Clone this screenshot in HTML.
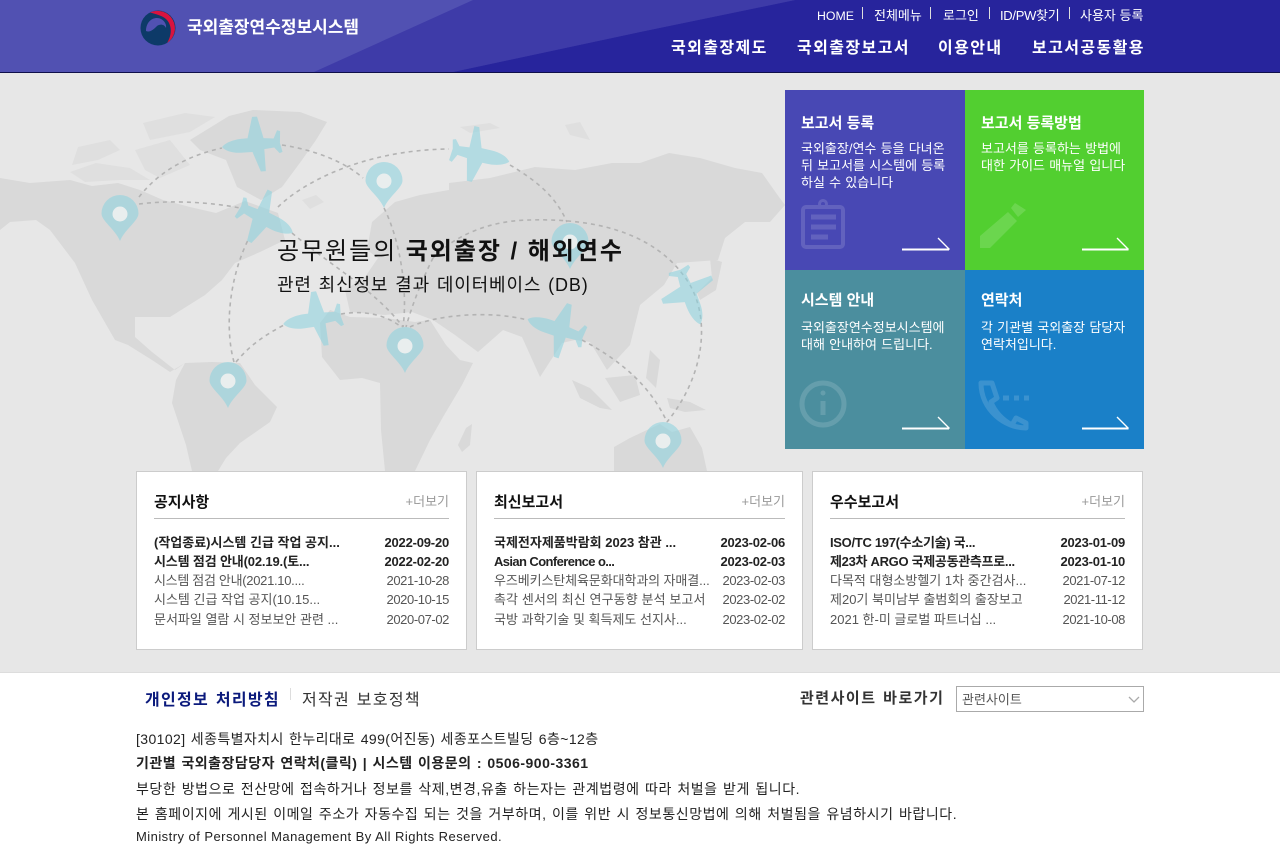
<!DOCTYPE html>
<html lang="ko">
<head>
<meta charset="utf-8">
<title>국외출장연수정보시스템</title>
<style>
*{box-sizing:border-box;margin:0;padding:0}
html,body{width:1280px;height:866px;overflow:hidden;background:#fff}
body{position:relative;font-family:"Liberation Sans","Noto Sans CJK KR",sans-serif;color:#222}
a{color:inherit;text-decoration:none}
.t{position:absolute;white-space:nowrap;line-height:20px;height:20px;display:block}
#hero{position:absolute;left:0;top:0;width:1280px;height:672px;background:#e7e7e7}
#map{position:absolute;left:0;top:0}
#head{position:absolute;left:0;top:0;width:1280px;height:73px}
.top{font-size:13px;color:#fff;top:6px}
.sep{position:absolute;width:1px;height:12px;top:7px;background:#ddd}
.nav{font-size:16px;font-weight:700;color:#fff;top:39px;letter-spacing:1.4px}
.tile{position:absolute;width:180px;height:180px;color:#fff}
.tile b{position:absolute;left:16px;top:22px;font-size:15px;line-height:20px;white-space:nowrap}
.tile p{position:absolute;left:16px;top:49px;font-size:13px;line-height:17px;white-space:nowrap;word-spacing:.6px}
.tile svg{position:absolute;left:0;top:0}
.card{position:absolute;top:471px;height:179px;background:#fff;border:1px solid #ccc}
.card h3{position:absolute;left:17px;top:20px;font-size:15px;line-height:22px;font-weight:700;color:#111}
.card .more{position:absolute;top:20px;font-size:13px;line-height:20px;color:#999}
.card hr{position:absolute;left:17px;top:46px;height:1px;border:0;background:#bbb}
.row{position:absolute;left:17px;font-size:13px;line-height:20px;height:20px;white-space:nowrap;color:#555}
.row i{position:absolute;top:0;font-style:normal;right:0;letter-spacing:-.4px}
.row.b{font-weight:700;color:#222}
.row.b i{letter-spacing:-.2px}
.ft{font-size:14px;color:#222;left:136px;word-spacing:1px;letter-spacing:.55px}
</style>
</head>
<body>
<div id="hero">
<svg id="map" width="785" height="471" viewBox="0 0 785 471">
<defs>
<path id="pl" d="M-30 0C-27-4-18-7-8-7L-4-7 2-28 7-28 12-6 22-5 26-13 29-12 28 0 30 9 27 10 22 4 12 5 12 27 7 27 0 7-10 7C-20 7-27 4-30 0Z"/>
<path id="pin" d="M0 46C-5 34-18.500 26-18.500 18.500A18.500 18.500 0 1 1 18.500 18.500C18.500 26 5 34 0 46Z"/>
</defs>
<g fill="#d9d9d9">
<path d="M0 178 30 183 70 180 92 186 118 183 140 190 163 200 190 207 216 213 245 201 278 213 285 240 260 252 235 263 222 280 205 295 170 317 150 317 135 317 135 337 152 352 175 370 185 363 170 372 152 360 128 345 115 340 92 300 75 263 50 230 36 220 10 222 0 230Z"/>
<path d="M185 363 212 362 240 363 255 385 277 407 270 422 240 443 226 458 218 471 192 471 186 445 172 403 176 380Z"/>
<path d="M190 140 229 116 253 110 300 112 327 122 316 140 302 160 282 187 261 200 237 187 226 160 200 150Z"/>
<path d="M320 323 330 310 350 317 385 318 415 322 430 320 446 345 460 360 473 363 462 385 443 417 430 440 415 471 385 471 381 430 380 383 362 378 340 380 322 357Z"/>
<path d="M466 428 472 424 470 445 462 452 458 445Z"/>
<path d="M367 250 372 222 395 202 420 195 449 190 449 183 490 178 535 167 575 170 612 163 640 163 669 153 700 158 735 168 762 173 779 197 785 205 770 222 745 222 725 238 718 260 677 263 664 285 640 305 630 345 607 370 590 342 575 340 562 343 540 377 522 337 503 330 478 352 455 335 433 320 412 312 385 315 350 312 345 290 365 277 378 258Z"/>
<path d="M710 258 722 262 716 290 700 300 697 293 712 278Z"/>
<path d="M572 380 590 388 612 410 600 408 580 398ZM605 378 635 375 640 395 620 402ZM650 350 660 360 656 388 646 378ZM667 398 690 402 706 410 685 412 670 408Z"/>
<path d="M614 447 630 438 647 430 660 424 672 432 690 427 702 448 707 471 614 471Z"/>
</g>
<g fill="#dfdfdf">
<path d="M78 147 110 140 120 150 98 160 72 165ZM143 123 185 113 215 117 190 132 150 140ZM70 172 96 163 130 168 150 180 120 180 85 182ZM135 150 170 140 190 165 160 178 145 170Z"/>
<path d="M302 200 316 195 324 202 310 209ZM460 127 490 123 500 128 470 133ZM565 125 580 122 590 140 570 135Z"/>
</g>
<g fill="none" stroke="#b3b3b3" stroke-width="1.600" stroke-dasharray="4 4">
<path d="M139 197C160 170 190 155 222 148M282 145C315 150 345 162 363 178"/>
<path d="M139 204C170 200 210 202 240 208"/>
<path d="M278 207C300 185 360 150 449 149"/>
<path d="M510 165C535 180 555 195 567 222"/>
<path d="M433 258C460 230 500 220 530 220C600 218 660 235 690 285C710 320 705 375 667 422"/>
<path d="M384 208C400 240 408 290 403 327"/>
<path d="M292 233C330 265 375 290 403 327M433 258C422 280 412 305 406 327"/>
<path d="M234 362C225 330 228 280 249 238"/>
<path d="M236 362C250 345 265 335 284 325M341 314C365 310 385 315 400 326"/>
<path d="M410 327C435 315 490 310 527 320"/>
<path d="M582 340C620 360 650 385 667 422"/>
</g>
<g fill="#8ed3df" opacity=".58">
<use href="#pl" transform="translate(252 145) rotate(-4)"/>
<use href="#pl" transform="translate(480 155) rotate(193)"/>
<use href="#pl" transform="translate(266 219) rotate(207)"/>
<use href="#pl" transform="translate(313 320) rotate(-8)"/>
<use href="#pl" transform="translate(556 329) rotate(19)"/>
<use href="#pl" transform="translate(690 296) rotate(250)"/>
<use href="#pin" transform="translate(120 195)"/>
<use href="#pin" transform="translate(384 162)"/>
<use href="#pin" transform="translate(570 223)"/>
<use href="#pin" transform="translate(405 327)"/>
<use href="#pin" transform="translate(228 362)"/>
<use href="#pin" transform="translate(663 422)"/>
</g>
<g fill="#e9eeee">
<circle cx="120" cy="214" r="7.500"/><circle cx="384" cy="181" r="7.500"/><circle cx="570" cy="242" r="7.500"/>
<circle cx="405" cy="346" r="7.500"/><circle cx="228" cy="381" r="7.500"/><circle cx="663" cy="441" r="7.500"/>
</g>
</svg>
<span class="t" style="left:277px;top:238px;height:28px;line-height:28px;font-size:24px;color:#111;letter-spacing:1.95px">공무원들의 <b>국외출장 / 해외연수</b></span>
<span class="t" style="left:277px;top:273px;height:24px;line-height:24px;font-size:18px;color:#111;word-spacing:1px;letter-spacing:.85px">관련 최신정보 결과 데이터베이스 (DB)</span>

<a class="tile" href="#" style="left:785px;top:90px;background:#4848b4">
<b style="top:24px">보고서 등록</b>
<p style="top:50px">국외출장/연수 등을 다녀온<br>뒤 보고서를 시스템에 등록<br>하실 수 있습니다</p>
<svg width="180" height="180" fill="none" stroke="#fff">
<g opacity=".14"><rect x="18" y="117" width="40" height="40" rx="3" stroke-width="4"/><path stroke-width="5" d="M26 127h25M26 137h25M26 147h17"/><circle cx="38" cy="114" r="3.500" stroke-width="3"/></g>
<path stroke-width="2" d="M117 159.500h47"/><path stroke-width="1.300" d="M153 148l11.500 11.500"/>
</svg>
</a>
<a class="tile" href="#" style="left:965px;top:90px;width:179px;background:#52cf30">
<b style="top:24px">보고서 등록방법</b>
<p style="top:50px">보고서를 등록하는 방법에<br>대한 가이드 매뉴얼 입니다</p>
<svg width="179" height="180" fill="none" stroke="#fff">
<g fill="#fff" stroke="none" opacity=".15"><path d="M15 158 15 146 43 122 52 131 25 158ZM50 113 61 120 53 127 46 118Z"/></g>
<path stroke-width="2" d="M117 159.500h46.500"/><path stroke-width="1.300" d="M152 148l11.500 11.500"/>
</svg>
</a>
<a class="tile" href="#" style="left:785px;top:270px;height:179px;background:#4b8e9e">
<b style="top:21px">시스템 안내</b>
<p>국외출장연수정보시스템에<br>대해 안내하여 드립니다.</p>
<svg width="180" height="179" fill="none" stroke="#fff">
<g opacity=".14"><circle cx="38" cy="134" r="21" stroke-width="5"/><path stroke-width="5" d="M38 131v14"/><circle cx="38" cy="123" r="2.500" fill="#fff" stroke="none"/></g>
<path stroke-width="2" d="M117 158.500h47"/><path stroke-width="1.300" d="M153 147l11.500 11.500"/>
</svg>
</a>
<a class="tile" href="#" style="left:965px;top:270px;width:179px;height:179px;background:#1a80c8">
<b style="top:21px">연락처</b>
<p>각 기관별 국외출장 담당자<br>연락처입니다.</p>
<svg width="179" height="179" fill="none" stroke="#fff">
<g opacity=".14"><path stroke-width="5" stroke-linejoin="round" d="M16 113L27 113 32 128 26 132C30 142 38 150 47 155L51 148 61 153 61 158C40 158 16 140 16 113Z"/><path stroke-width="5" d="M38 128h6M49 128h5M59 128h5"/></g>
<path stroke-width="2" d="M117 158.500h46.500"/><path stroke-width="1.300" d="M152 147l11.500 11.500"/>
</svg>
</a>
</div>

<div id="head">
<svg width="1280" height="73" style="position:absolute;left:0;top:0">
<rect width="1280" height="72" fill="#5151b2"/>
<polygon points="473,0 314,72 453,72 640,32 795,0" fill="#3e3ba8"/>
<polygon points="795,0 640,32 453,72 1280,72 1280,0" fill="#27249c"/>
<rect y="72" width="1280" height="1" fill="#0f0f4a"/>
<circle cx="158" cy="28" r="17.500" fill="#0d3a68"/>
<path d="M150 12.500A17.500 17.500 0 0 1 167 43C171 37 173 27 167 20 162 15 155 14 150 12.500Z" fill="#d8133f"/>
<path d="M146 31C146 23 151 18 157 18 163 18 167 24 166 28 164 24 160 24 157 26 154 29 150 33 146 31Z" fill="#5151b2"/>
</svg>
<a class="t" href="#" style="left:187px;top:18px;font-size:17px;font-weight:700;color:#fff;letter-spacing:0">국외출장연수정보시스템</a>
<a class="t top" href="#" style="left:817px;font-size:12.300px">HOME</a><i class="sep" style="left:862px"></i>
<a class="t top" href="#" style="left:874px">전체메뉴</a><i class="sep" style="left:930px"></i>
<a class="t top" href="#" style="left:943px">로그인</a><i class="sep" style="left:989px"></i>
<a class="t top" href="#" style="left:1000px;letter-spacing:-.3px">ID/PW찾기</a><i class="sep" style="left:1069px"></i>
<a class="t top" href="#" style="left:1080px">사용자 등록</a>
<a class="t nav" href="#" style="left:671px">국외출장제도</a>
<a class="t nav" href="#" style="left:797px">국외출장보고서</a>
<a class="t nav" href="#" style="left:938px">이용안내</a>
<a class="t nav" href="#" style="left:1032px">보고서공동활용</a>
</div>

<section class="card" style="left:136px;width:331px">
<h3>공지사항</h3><a class="more" href="#" style="right:17px">+더보기</a><hr style="width:295px">
<div class="row b" style="top:61px;width:295px">(작업종료)시스템 긴급 작업 공지...<i>2022-09-20</i></div>
<div class="row b" style="top:80px;width:295px"><span style="letter-spacing:-.15px">시스템 점검 안내(02.19.(토...</span><i>2022-02-20</i></div>
<div class="row" style="top:99px;width:295px"><span style="letter-spacing:-.3px">시스템 점검 안내(2021.10....</span><i>2021-10-28</i></div>
<div class="row" style="top:118px;width:295px">시스템 긴급 작업 공지(10.15...<i>2020-10-15</i></div>
<div class="row" style="top:138px;width:295px">문서파일 열람 시 정보보안 관련 ...<i>2020-07-02</i></div>
</section>
<section class="card" style="left:476px;width:327px">
<h3>최신보고서</h3><a class="more" href="#" style="right:17px">+더보기</a><hr style="width:291px">
<div class="row b" style="top:61px;width:291px">국제전자제품박람회 2023 참관 ...<i>2023-02-06</i></div>
<div class="row b" style="top:80px;width:291px"><span style="letter-spacing:-.6px">Asian Conference o...</span><i>2023-02-03</i></div>
<div class="row" style="top:99px;width:291px"><span style="letter-spacing:-.1px">우즈베키스탄체육문화대학과의 자매결...</span><i>2023-02-03</i></div>
<div class="row" style="top:118px;width:291px"><span style="letter-spacing:.1px">촉각 센서의 최신 연구동향 분석 보고서</span><i>2023-02-02</i></div>
<div class="row" style="top:138px;width:291px">국방 과학기술 및 획득제도 선지사...<i>2023-02-02</i></div>
</section>
<section class="card" style="left:812px;width:331px">
<h3>우수보고서</h3><a class="more" href="#" style="right:17px">+더보기</a><hr style="width:295px">
<div class="row b" style="top:61px;width:295px"><span style="letter-spacing:-.3px">ISO/TC 197(수소기술) 국...</span><i>2023-01-09</i></div>
<div class="row b" style="top:80px;width:295px"><span style="letter-spacing:-.3px">제23차 ARGO 국제공동관측프로...</span><i>2023-01-10</i></div>
<div class="row" style="top:99px;width:295px">다목적 대형소방헬기 1차 중간검사...<i>2021-07-12</i></div>
<div class="row" style="top:118px;width:295px">제20기 북미남부 출범회의 출장보고<i>2021-11-12</i></div>
<div class="row" style="top:138px;width:295px">2021 한-미 글로벌 파트너십 ...<i>2021-10-08</i></div>
</section>

<footer style="position:absolute;left:0;top:672px;width:1280px;height:194px;background:#fff;border-top:1px solid #ddd">
</footer>
<a class="t" href="#" style="left:145px;top:691px;font-size:16px;font-weight:700;color:#0b1a7c;letter-spacing:1.3px;word-spacing:1px">개인정보 처리방침</a>
<i style="position:absolute;left:290px;top:688px;width:1px;height:12px;background:#ddd"></i>
<a class="t" href="#" style="left:302px;top:691px;font-size:16px;color:#333;letter-spacing:1.3px;word-spacing:1px">저작권 보호정책</a>
<span class="t" style="left:800px;top:689px;font-size:15px;font-weight:700;color:#333;letter-spacing:1.5px;word-spacing:1px">관련사이트 바로가기</span>
<div style="position:absolute;left:956px;top:686px;width:188px;height:26px;border:1px solid #aaa;background:#fff">
<span class="t" style="left:5px;top:3px;font-size:13px;color:#555">관련사이트</span>
<svg width="12" height="8" style="position:absolute;left:171px;top:9px" fill="none" stroke="#aaa" stroke-width="1.300"><path d="M1 1l5 5 5-5"/></svg>
</div>
<span class="t ft" style="top:729px;letter-spacing:.4px">[30102] 세종특별자치시 한누리대로 499(어진동) 세종포스트빌딩 6층~12층</span>
<a class="t ft" href="#" style="top:753px;font-weight:700;letter-spacing:.48px">기관별 국외출장담당자 연락처(클릭) | 시스템 이용문의 : 0506-900-3361</a>
<span class="t ft" style="top:779px">부당한 방법으로 전산망에 접속하거나 정보를 삭제,변경,유출 하는자는 관계법령에 따라 처벌을 받게 됩니다.</span>
<span class="t ft" style="top:804px">본 홈페이지에 게시된 이메일 주소가 자동수집 되는 것을 거부하며, 이를 위반 시 정보통신망법에 의해 처벌됨을 유념하시기 바랍니다.</span>
<span class="t ft" style="top:827px;font-size:13px;word-spacing:0;letter-spacing:.46px">Ministry of Personnel Management By All Rights Reserved.</span>
</body>
</html>
